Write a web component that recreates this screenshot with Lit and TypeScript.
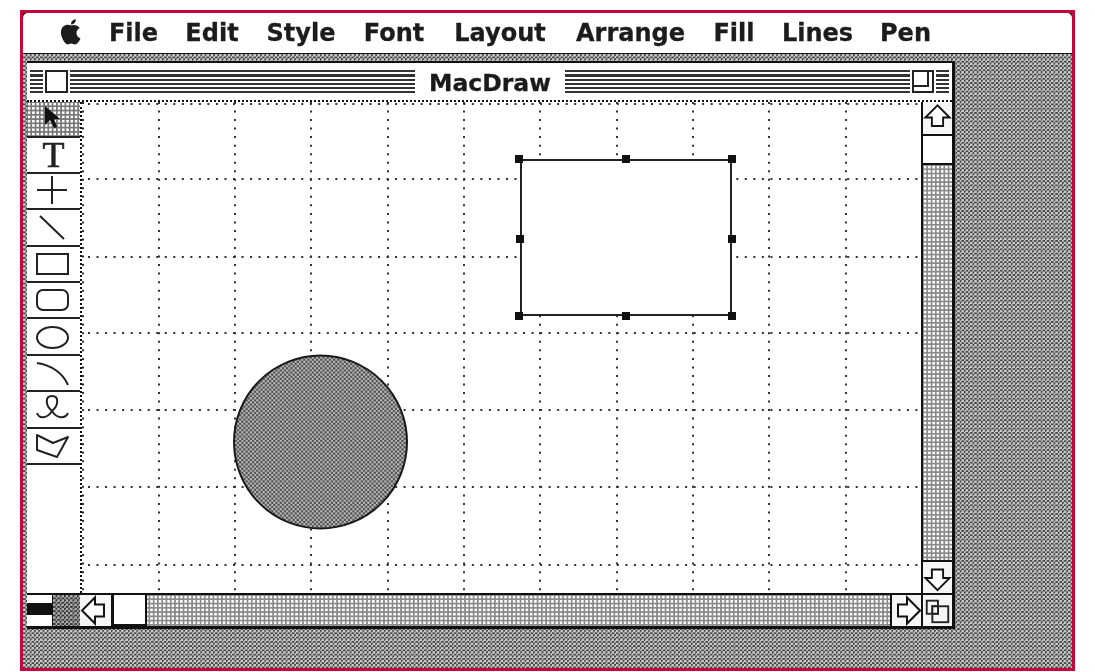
import { LitElement, html, css, svg } from "lit";
import { customElement } from "lit/decorators.js";

const MENUS: [string, number][] = [["File", 47], ["Edit", 52], ["Style", 68], ["Font", 60], ["Layout", 94], ["Arrange", 109], ["Fill", 40], ["Lines", 69], ["Pen", 49]];
const VX = [159, 235, 311, 388, 464, 540, 617, 693, 769, 846];
const HY = [104, 179, 257, 333, 410, 487, 565];
const HANDLES = [[519, 159], [626, 159], [732, 159], [520, 239], [732, 239], [519, 316], [626, 316], [732, 316]];

const arrow = (dir: string) => html`<svg class="arrow ${dir}" viewBox="0 0 31 31"><path d="M15.5 2 2.5 15H9.5V24H21.5V15H28.5Z" fill="#fff" stroke="#111" stroke-width="2" stroke-linejoin="miter"/></svg>`;

const TOOLS = [
  svg`<path d="M18 5V24L23 19 27 27 30 26 27 18 33 18Z" fill="#111" stroke="none"/>`,
  null,
  svg`<path d="M25 3V31M10 17H40" fill="none"/>`,
  svg`<path d="M13 7 37 30" fill="none"/>`,
  svg`<rect x="10" y="8" width="31" height="20" fill="none"/>`,
  svg`<rect x="10" y="8" width="31" height="20" rx="6" fill="none"/>`,
  svg`<ellipse cx="25.5" cy="18.5" rx="15.5" ry="10.5" fill="none"/>`,
  svg`<path d="M10 8C24 10 36 18 41 30" fill="none"/>`,
  svg`<path d="M10 22C12 28 20 28 25 20 18 14 18 5 25 5 32 5 32 14 25 20 30 28 38 28 41 22" fill="none"/>`,
  svg`<path d="M10 7 26 15 41 9 35 20 30 29 10 22Z" fill="none" stroke-linejoin="round"/>`,
];

@customElement("app-root")
export class AppRoot extends LitElement {
  static styles = css`
    :host { display: block; width: 1095px; height: 672px; box-sizing: border-box; padding: 10px 20px 1px; background: #fff; overflow: hidden; }
    .frame { width: 1055px; height: 661px; box-sizing: border-box; border: 3px solid #c4063f; display: flex; flex-direction: column; background: #222; overflow: hidden; }
    .menubar { height: 40px; flex: none; background: #fff; border-bottom: 1px solid #111; border-radius: 5px 5px 0 0; display: flex; align-items: center; padding-left: 37px; font: bold 24px "DejaVu Sans", sans-serif; color: #1c1c1c; -webkit-text-stroke: .3px #1c1c1c; }
    .apple { width: 22px; height: 26px; margin-right: 28px; margin-top: -3px; flex: none; }
    .menus { display: flex; gap: 29px; margin-top: -1px; filter: blur(.35px); }
    .menu { display: flex; justify-content: center; white-space: nowrap; }
    .desktop { flex: 1; padding: 7px 0 0 4px; background: conic-gradient(#444 25%, #c8c8c8 0 50%, #444 0 75%, #c8c8c8 0) 0 0 / 4.27px 4.27px; min-height: 0; }
    .window { width: 928px; height: 568px; box-sizing: border-box; background: #fff; border-top: 2px solid #111; border-right: 3px solid #111; border-bottom: 3px solid #111; display: flex; flex-direction: column; filter: blur(.35px); }
    .title { height: 37px; flex: none; display: flex; align-items: center; gap: 2px; padding: 0 3px; border-bottom: 2px dotted #111; }
    .stripes { height: 23px; background: repeating-linear-gradient(#333 0 2.3px, #fff 2.3px 4.27px); }
    .s1 { width: 13px; }
    .s2 { flex: 1; }
    .s3 { width: 13px; }
    .closebox { width: 23px; height: 23px; box-sizing: border-box; border: 2px solid #222; background: #fff; flex: none; }
    .zoombox { width: 22px; height: 23px; flex: none; position: relative; box-sizing: border-box; border: 2px solid #222; background: #fff; }
    .zoombox::after { content: ""; position: absolute; left: -2px; top: -2px; width: 13px; height: 13px; border: 2px solid #222; }
    .name { font: bold 23.5px "DejaVu Sans", sans-serif; padding: 0 12px; color: #1a1a1a; margin-top: 2px; -webkit-text-stroke: .3px #1a1a1a; }
    .body { flex: none; height: 491px; display: flex; }
    .toolbox { width: 53px; flex: none; border-right: 2px dotted #111; display: flex; flex-direction: column; background: #fff; }
    .tool { height: 36.4px; box-sizing: border-box; border-bottom: 2px solid #222; flex: none; display: flex; align-items: center; justify-content: center; }
    .tool svg { width: 53px; height: 36px; stroke: #222; stroke-width: 2; }
    .tool.sel { height: 35.5px; background: radial-gradient(circle, #fff 0 1.2px, transparent 1.5px) 0 0 / 4.27px 4.27px, #777; }
    .t { font: 36px "Liberation Serif", serif; line-height: 1; color: #222; -webkit-text-stroke: .7px #222; }
    .canvas { width: 839px; height: 491px; flex: none; display: block; background: #fff; }
    .vscroll { width: 31px; flex: none; box-sizing: border-box; display: flex; flex-direction: column; border-left: 2px solid #111; }
    .arrow { display: block; width: 31px; height: 31px; flex: none; background: #f6f6f6; }
    .vscroll .arrow { width: 29px; }
    .vscroll .arrow.up { height: 32px; }
    .down { transform: rotate(180deg); }
    .left { transform: rotate(-90deg); }
    .right { transform: rotate(90deg); }
    .vthumb { height: 31px; flex: none; box-sizing: border-box; background: #fff; border-top: 2px solid #111; border-bottom: 2px solid #111; }
    .track { flex: 1; min-width: 0; background: radial-gradient(circle, #fff 0 1.3px, transparent 1.6px) 0 0 / 4.27px 4.27px, #8a8a8a; }
    .vtrack { border-bottom: 2px solid #111; }
    .bottom { height: 33px; flex: none; display: flex; box-sizing: border-box; border-top: 2px solid #111; }
    .pen { width: 25px; flex: none; background: linear-gradient(#fff 0 8px, #111 8px 20px, #fff 20px); }
    .pat { width: 28px; flex: none; background: conic-gradient(#333 25%, #aaa 0 50%, #333 0 75%, #aaa 0) 0 0 / 4.27px 4.27px; border-left: 1px solid #111; box-sizing: border-box; }
    .harrow { width: 31px; flex: none; display: flex; }
    .harrow.end { border-left: 2px solid #111; width: 29px; overflow: hidden; justify-content: center; }
    .hthumb { width: 36px; height: 100%; box-sizing: border-box; flex: none; background: #fff; border-left: 3px solid #111; border-right: 2px solid #111; border-bottom: 2px solid #111; }
    .htrack { display: flex; }
    .resize { width: 31px; flex: none; box-sizing: border-box; border-left: 2px solid #111; background: #f6f6f6; display: block; height: 31px; }
  `;

  render() {
    return html`<div class="frame">
      <div class="menubar">
        <svg class="apple" viewBox="0 0 22 26"><path d="M11 6.5C9 5.5 5.5 5.5 3.2 7.5 .5 10 .5 14.5 2 18.5 3.5 22.5 6 25.5 8 25.5 9 25.5 10 24.5 11.2 24.5 12.5 24.5 13.5 25.5 15 25.5 17 25.5 19.5 22 20.5 19.5 18 18.5 16.5 16.5 16.5 14 16.5 11.5 18 10 19.8 9 18 6.5 14 5.2 11 6.5ZM11 5.5C11 3 12.5.5 15.8.2 16 3 14 5.5 11 5.5Z" fill="#1c1c1c"/></svg>
        <div class="menus">${MENUS.map(([m, w]) => html`<span class="menu" style="width:${w}px">${m}</span>`)}</div>
      </div>
      <div class="desktop">
        <div class="window">
          <div class="title">
            <div class="stripes s1"></div>
            <div class="closebox"></div>
            <div class="stripes s2"></div>
            <div class="name">MacDraw</div>
            <div class="stripes s2"></div>
            <div class="zoombox"></div>
            <div class="stripes s3"></div>
          </div>
          <div class="body">
            <div class="toolbox">
              ${TOOLS.map((t, i) => html`<div class="tool ${i === 0 ? "sel" : ""}">
                ${t ? html`<svg viewBox="0 0 53 36">${t}</svg>` : html`<span class="t">T</span>`}
              </div>`)}
            </div>
            <svg class="canvas" viewBox="82 102 839 491">
              <defs>
                <pattern id="dith" patternUnits="userSpaceOnUse" width="4.27" height="4.27">
                  <rect width="4.27" height="4.27" fill="#bdbdbd"/>
                  <rect width="2.135" height="2.135" fill="#4a4a4a"/>
                  <rect x="2.135" y="2.135" width="2.135" height="2.135" fill="#4a4a4a"/>
                </pattern>
              </defs>
              <g stroke="#333" stroke-width="2" stroke-dasharray="2 6.53" fill="none">
                <path d="M83 102V593"/>
                ${VX.map((x) => svg`<path d="M${x} 102V593"/>`)}
                ${HY.map((y) => svg`<path d="M88 ${y}H918"/>`)}
              </g>
              <rect x="521" y="160" width="210" height="155" fill="#fff" stroke="#222" stroke-width="2"/>
              ${HANDLES.map(([x, y]) => svg`<rect x="${x - 4}" y="${y - 4}" width="8" height="8" fill="#111"/>`)}
              <circle cx="320.5" cy="442" r="86.5" fill="url(#dith)" stroke="#1a1a1a" stroke-width="2"/>
            </svg>
            <div class="vscroll">
              ${arrow("up")}
              <div class="vthumb"></div>
              <div class="track vtrack"></div>
              ${arrow("down")}
            </div>
          </div>
          <div class="bottom">
            <div class="pen"></div>
            <div class="pat"></div>
            <div class="harrow">${arrow("left")}</div>
            <div class="track htrack"><div class="hthumb"></div></div>
            <div class="harrow end">${arrow("right")}</div>
            <svg class="resize" viewBox="0 0 31 31" fill="none" stroke="#222" stroke-width="2"><rect x="4" y="5" width="12" height="14"/><rect x="10" y="11" width="17" height="17"/><path d="M10 11H16V19H10Z" fill="#f6f6f6"/></svg>
          </div>
        </div>
      </div>
    </div>`;
  }
}
